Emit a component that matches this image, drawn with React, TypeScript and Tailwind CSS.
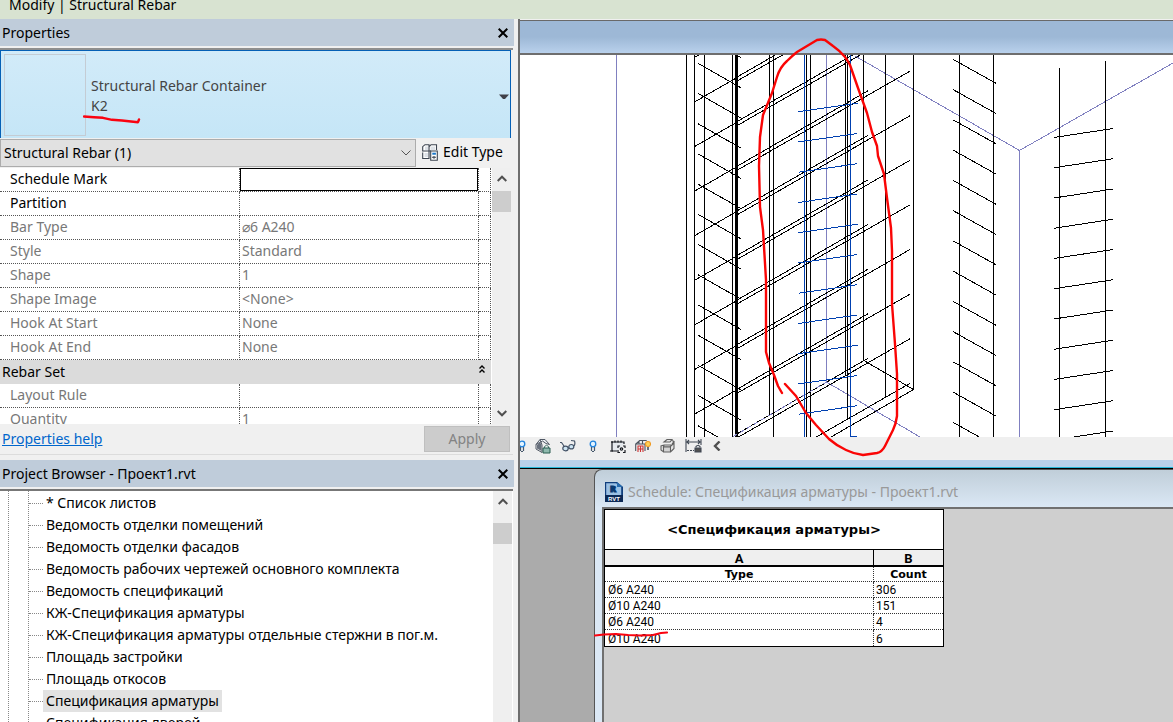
import React from 'react'

const properties = [
  { name: 'Schedule Mark', value: '', editable: true },
  { name: 'Partition', value: '', editable: true },
  { name: 'Bar Type', value: '⌀6 A240' },
  { name: 'Style', value: 'Standard' },
  { name: 'Shape', value: '1' },
  { name: 'Shape Image', value: '<None>' },
  { name: 'Hook At Start', value: 'None' },
  { name: 'Hook At End', value: 'None' },
]

const rebarSet = [
  { name: 'Layout Rule', value: '' },
  { name: 'Quantity', value: '1' },
]

const views = [
  '* Список листов',
  'Ведомость отделки помещений',
  'Ведомость отделки фасадов',
  'Ведомость рабочих чертежей основного комплекта',
  'Ведомость спецификаций',
  'КЖ-Спецификация арматуры',
  'КЖ-Спецификация арматуры отдельные стержни в пог.м.',
  'Площадь застройки',
  'Площадь откосов',
  'Спецификация арматуры',
  'Спецификация дверей',
]

const schedule = [
  ['Ø6 A240', '306'],
  ['Ø10 A240', '151'],
  ['Ø6 A240', '4'],
  ['Ø10 A240', '6'],
]

const range = (from: number, to: number) =>
  Array.from({ length: to - from + 1 }, (_, i) => from + i)

function PanelTitle({ title }: { title: string }) {
  return (
    <div className="mr-1 flex h-[27px] items-center justify-between bg-[#bfccda] pl-0.5 pr-1">
      <h2 className="text-sm">{title}</h2>
      <button aria-label={`Close ${title}`} className="p-0.5">
        <svg width="10" height="10" viewBox="0 0 10 10" stroke="#000" strokeWidth="2">
          <path d="M.7.7l8.6 8.6M9.3.7L.7 9.3" />
        </svg>
      </button>
    </div>
  )
}

function Chevron({ down = false }: { down?: boolean }) {
  return (
    <svg width="10" height="7" viewBox="0 0 10 7" fill="none" stroke="#505050" strokeWidth="2">
      <path d={down ? 'M.7 1L5 5.3 9.3 1' : 'M.7 6L5 1.700 9.300 6'} />
    </svg>
  )
}

function PropertyRow({ name, value, editable }: { name: string; value: string; editable?: boolean }) {
  const first = name === 'Schedule Mark'
  return (
    <tr className={editable ? 'h-6 text-black' : 'h-6 text-[#787878]'}>
      <th scope="row" className="h-6 border-b border-r border-dotted border-[#555] p-0 pb-0.5 pl-2.5 text-left font-normal">
        {name}
      </th>
      <td className="h-6 border-b border-r border-dotted border-[#555] p-0">
        {editable ? (
          <input
            aria-label={name}
            defaultValue={value}
            className={first ? 'block h-[23px] w-full border border-black px-0.5' : 'block h-[23px] w-full px-0.5'}
          />
        ) : (
          <span className="block pb-0.5 pl-0.5">{value}</span>
        )}
      </td>
      <td className="h-6 border-b border-r border-dotted border-[#555] p-0" />
    </tr>
  )
}

function PropertiesPanel() {
  return (
    <section>
      <PanelTitle title="Properties" />
      <div className="mr-[5px] mt-0.5 border-t-2 border-[#8f8f8f] pr-0.5">
        <button className="relative flex h-[88px] w-full items-center border border-b-0 border-[#0560b6] bg-linear-to-b from-[#d2ebf9] to-[#c5e6f7] pl-[3px] text-left text-sm text-[#444]">
          <span className="h-[82px] w-[82px] border border-[#c4ccd4]" />
          <span className="flex-1 pl-[5px] pt-0.5 leading-5">
            Structural Rebar Container
            <br />
            K2
          </span>
          <svg className="mr-px mt-1" width="10" height="6" viewBox="0 0 10 6" fill="#404048">
            <path d="M0 .5h10L6 5H4z" />
          </svg>
          <svg className="absolute left-[82px] top-[64px]" width="60" height="10" viewBox="83 115 60 10" fill="none" stroke="#fa0310" strokeWidth="2.400" strokeLinecap="round" strokeLinejoin="round">
            <path d="M84 116.500l10 .7 9 .6 9 2 10 .7 9 1 7 .7 1-2.700" />
          </svg>
        </button>
        <div className="flex h-[30px] items-center text-sm">
          <div className="relative w-[416px]">
            <select aria-label="Element filter" className="block h-7 w-full appearance-none border border-[#acacac] bg-[#e1e1e1] pl-[3px]">
              <option>Structural Rebar (1)</option>
            </select>
            <svg className="pointer-events-none absolute right-[5px] top-[11px]" width="10" height="6" viewBox="0 0 10 6" fill="none" stroke="#555">
              <path d="M.5.5L5 5 9.500.5" />
            </svg>
          </div>
          <button className="flex flex-1 items-center gap-[5px] pb-0.5 pl-1.5">
            <svg width="16" height="17" viewBox="0 0 16 17" fill="none" stroke="#3c4450" strokeWidth="1.100">
              <path d="M7 .7H3L.7 2.700V7H7zM14.500 6V.7H9L7.500 2.500M7 7v7.500H.7V8.500M7 7h2" fill="#fff" />
              <path d="M3 2.500h3V6H3zM9 2.500h4V6H9zM2.500 9H6v4H2.500z" fill="#dde2e8" stroke="none" />
              <path d="M8.700 7h6.600v9.300H8.700z" fill="#fff" />
              <path d="M10.300 8.700h3.600v2h-3.600z" fill="#1976c8" stroke="none" />
              <path d="M10 13.300h4M12 12v2.700" />
            </svg>
            Edit Type
          </button>
        </div>
        <div className="flex h-64 overflow-hidden bg-white text-sm">
          <div className="flex-1">
            <table className="w-[491px] table-fixed border-separate border-spacing-0">
              <colgroup>
                <col className="w-60" />
                <col />
                <col className="w-3" />
              </colgroup>
              <tbody>
                {properties.map((p) => (
                  <PropertyRow key={p.name} {...p} />
                ))}
                <tr className="h-6 bg-[#dbdbdb]">
                  <th colSpan={2} scope="colgroup" className="h-6 p-0 pl-0.5 text-left font-normal">
                    Rebar Set
                  </th>
                  <td className="p-0">
                    <svg className="mb-1.5" width="6" height="8" viewBox="0 0 6 8" fill="none" stroke="#000" strokeWidth="1.400">
                      <path d="M.5 3.500L3 1l2.500 2.500M.5 7.500L3 5l2.500 2.500" />
                    </svg>
                  </td>
                </tr>
                {rebarSet.map((p) => (
                  <PropertyRow key={p.name} {...p} />
                ))}
              </tbody>
            </table>
          </div>
          <div className="flex w-[19px] flex-col items-center justify-between bg-[#efefef] py-[7px]">
            <div className="flex w-full flex-col items-center gap-[9px]">
              <Chevron />
              <div className="h-[21px] w-full bg-[#cdcdcd]" />
            </div>
            <Chevron down />
          </div>
        </div>
        <div className="flex h-[30px] items-center justify-between pl-0.5 pr-px text-sm">
          <a href="#help" className="text-[#0066cc] underline">
            Properties help
          </a>
          <button className="h-[26px] w-[86px] border border-[#bfbfbf] bg-[#cccccc] text-[#838383]">Apply</button>
        </div>
      </div>
      <div className="mr-[5px] h-1.5 border-t border-[#dcdcdc] bg-[#f0f0f0]" />
    </section>
  )
}

function ProjectBrowser() {
  return (
    <section className="flex min-h-0 flex-1 flex-col">
      <PanelTitle title="Project Browser - Проект1.rvt" />
      <div className="mr-[5px] mt-0.5 flex min-h-0 flex-1 border-t-2 border-[#777] bg-white pr-px">
        <div className="ml-2 flex-1 overflow-hidden border-l border-dotted border-[#888] pl-[19px]">
          <ul className="border-l border-dotted border-[#888] pt-px text-sm">
            {views.map((v) => (
              <li key={v} className="flex h-[22px] items-center">
                <span className="w-3.5 border-t border-dotted border-[#888]" />
                <span className={v === 'Спецификация арматуры' ? 'bg-[#e2e2e2] px-[3px] leading-[22px]' : 'px-[3px] leading-[22px]'}>
                  {v}
                </span>
              </li>
            ))}
          </ul>
        </div>
        <div className="flex w-[19px] flex-col items-center gap-[18px] bg-[#efefef] pt-[7px]">
          <Chevron />
          <div className="h-[21px] w-full bg-[#cdcdcd]" />
        </div>
      </div>
    </section>
  )
}

// [x, bottom end] of each vertical bar
const blackVerticals = [
  [686, 437], [694, 437], [704, 437], [732, 437], [769, 416], [773, 437], [806, 437], [810, 437],
  [845, 375], [847, 419], [863, 360], [885, 397], [913, 389], [959, 437], [993, 437],
]

function RebarDrawing() {
  return (
    <svg className="block" width="653" height="382" viewBox="520 55 653 382" fill="none" shapeRendering="crispEdges">
      <g stroke="#8080c0">
        <path d="M616.500 55V437M826.500 55V382M1019.500 150V437" />
        <path d="M855 56L1019.500 150.500 1173 63" />
        <path d="M826.500 382L920 437" />
      </g>
      <g stroke="#000">
        {blackVerticals.map(([x, end]) => (
          <path key={x} d={`M${x + 0.5} 55V${end}`} />
        ))}
        <path d="M736.500 55V437" strokeWidth="3" />
        <path d="M1059.500 68V437M1105.500 61V437" />
        {range(-1, 12).map((n) => (
          <path key={`d${n}`} d={`M698 ${63.3 + n * 30.2}l43 24.500`} />
        ))}
        {range(-1, 7).map((n) => (
          <path key={`a${n}`} d={`M695 ${101.7 + n * 44.6}l41-23.600`} />
        ))}
        {range(-3, 6).map((n) => (
          <path key={`u${n}`} d={`M738 ${165.7 + n * 44.6}l130-75`} />
        ))}
        {range(-3, 7).map((n) => (
          <path key={`l${n}`} d={`M738 ${169.7 + n * 44.6}l172-98.600`} />
        ))}
        <path d="M863 360L913.500 389.500 831 437" />
        {range(0, 12).map((n) => (
          <path key={`r${n}`} d={`M953 ${59.3 + n * 30.25}l43 24`} />
        ))}
        {range(0, 10).map((n) => (
          <path key={`s${n}`} d={`M1054 ${137.5 + n * 30.25}l59-9`} />
        ))}
      </g>
      <path d="M733 436.500L826.500 382" stroke="#8080c0" strokeDasharray="5 3" />
      <g stroke="#0040b0">
        <path d="M804.500 55V437M850.500 55V437" />
        {range(0, 11).map((n) => (
          <path key={n} d={`M798.500 ${111.7 + n * 30.25}l59-8.500`} />
        ))}
      </g>
    </svg>
  )
}

function Bulb() {
  return (
    <svg width="16" height="16" viewBox="0 0 16 16" fill="none">
      <circle cx="8" cy="6" r="2.800" fill="#e4f4ff" stroke="#2082dc" strokeWidth="1.300" />
      <path d="M6.500 9v4M9.500 9v4M7 13.500h2" stroke="#46586c" strokeWidth="1.200" />
    </svg>
  )
}

function ViewControls() {
  return (
    <div className="flex h-[22px] items-center gap-[9px] overflow-hidden bg-[#efefef] pb-1">
      <button aria-label="Reveal constraints" className="-ml-1.5 -mr-1">
        <Bulb />
      </button>
      <button aria-label="Locked 3D view">
        <svg width="16" height="16" viewBox="0 0 16 16" fill="none" stroke="#505864">
          <path d="M1 6.500L5 1.500h5l4.500 5L11 5.500 7.500 3z" fill="#eef1f4" />
          <path d="M5 1.500L7 7M1 6.500V11l6 3.500V7" />
          <path d="M2 7l3-3 1.500 3v6L2 10.500z" fill="#68707c" stroke="none" />
          <path d="M9.500 10V8.500q2-2.500 4 0V10" stroke="#46756a" />
          <path d="M8 10h7v5H8z" fill="#8fb9ae" stroke="#285c50" />
        </svg>
      </button>
      <button aria-label="Temporary hide">
        <svg width="16" height="16" viewBox="0 0 16 16" fill="none" stroke="#455468" strokeWidth="1.200">
          <path d="M0 4.500h1.500L4 8M8 10.500l1-1M11 2.500l3.500.5q1 3-.5 5" />
          <ellipse cx="5.500" cy="10.500" rx="2.700" ry="2.300" fill="#cde5f3" />
          <ellipse cx="11.300" cy="8.700" rx="2.500" ry="2.200" fill="#cde5f3" />
        </svg>
      </button>
      <button aria-label="Reveal hidden elements">
        <Bulb />
      </button>
      <button aria-label="Crop view">
        <svg width="16" height="16" viewBox="0 0 16 16" fill="none" stroke="#161a20" strokeWidth="1.200">
          <path d="M7 13H2V4h12v2" fill="#e5e9ed" />
          <path d="M2 3v2M5 2.500v2M8 2.500v2M11 2.500v2M0 13h3" />
          <path d="M8 10V8h2M13 8h2v2M15 12v2.500h-2M10 14.500H8V12" />
          <circle cx="11.500" cy="11" r="1.200" />
        </svg>
      </button>
      <button aria-label="Show analytical model">
        <svg width="16" height="16" viewBox="0 0 16 16" fill="none" stroke="#4b535e" strokeWidth="1.100">
          <path d="M.7 13V6l4-3.500h7M.7 6h10M4 6V3M7.500 6V3M10 13V6" />
          <path d="M3 14V8h5v6M3 11h5M5.500 8v6" stroke="#cf3434" />
          <circle cx="13" cy="6" r="2.500" fill="#ffd45a" stroke="#f09922" />
          <path d="M13 9v3" stroke="#68707c" strokeWidth="2" />
        </svg>
      </button>
      <button aria-label="Highlight displacement sets">
        <svg width="16" height="16" viewBox="0 0 16 16" fill="none" stroke="#606060" strokeWidth="1.100">
          <path d="M4 4l3-2.500h5L10 4zM12 2.500l2 1-2 2.500M4 7l-3 1v4l2 1.500M4 7h8l-2 2H3.500zM12 7l2-2v5.500l-3 3" fill="#e5e5e5" />
          <path d="M3.500 9h7v5h-7z" fill="#d4d4d4" />
        </svg>
      </button>
      <button aria-label="Lock dimensions">
        <svg width="17" height="16" viewBox="0 0 17 16" fill="none" stroke="#404854" strokeWidth="1.100">
          <path d="M1 1v13M16 1v6M2 4h13M4 2L2 4l2 2M13 2l2 2-2 2" />
          <path d="M2 12.500h7" strokeDasharray="2 1" />
          <path d="M11 9.500V8.500q2-2 4 0v1" />
          <path d="M10 10h6v4h-6z" fill="#505050" />
        </svg>
      </button>
      <button aria-label="Scroll left" className="pl-0.5">
        <svg width="8" height="10" viewBox="0 0 8 10" fill="none" stroke="#505050" strokeWidth="2.400">
          <path d="M6.500.5L2 5l4.500 4.500" />
        </svg>
      </button>
    </div>
  )
}

function ModelView() {
  return (
    <section className="relative mt-px border-t border-[#696969]">
      <div className="h-8 bg-linear-to-b from-[#9db8d6] from-50% to-[#b9d1ec]" />
      <div className="border-t-2 border-[#6e6e6e] bg-white">
        <RebarDrawing />
      </div>
      <ViewControls />
      <div className="mt-px h-[9px] border-b border-black bg-[#b9d1ea] shadow-[inset_0_-1px_0_#28b8d8]" />
      <svg className="pointer-events-none absolute left-0 top-0" width="653" height="440" viewBox="520 21 653 440" fill="none" stroke="#fa0505" strokeWidth="2.400" strokeLinecap="round" strokeLinejoin="round">
        <path d="M782 393l-4-7-4-11-5-12-3-11V280l-3-50-3-23-1-41 1-29 3-22 9-22 5-16q3-10 10-16 5-5 10-9l15-9 5-3q4-1 8 0l8 6q6 4 12 11 3 4 5 8l8 23 9 25 5 19 5 14 1 10 6 18 3 24 4 30 1 23v53l3 40 2 30v42q-1 8-4 14l-8 16q-3 6-8 7l-14 2q-9-1-17-5-9-4-17-11l-13-14-10-12-10-17-11-12" />
      </svg>
    </section>
  )
}

function ScheduleWindow() {
  return (
    <section className="relative ml-[74px] flex flex-1 flex-col rounded-tl-lg border-l border-t border-[#555] bg-linear-to-b from-[#c0ced9] to-[#dbe8f5] to-15% pl-[7px]">
      <div className="flex h-[37px] items-center gap-[5px] pl-[3px] pt-[7px]">
        <svg width="18" height="20" viewBox="0 0 18 20">
          <path d="M0 0h12l6 5v15H0z" fill="#103e7c" />
          <path d="M1.200 1.200h10l5 4V13H1.200z" fill="#9bc0e3" />
          <path d="M12 0v5h6z" fill="#286bad" />
          <text x="5" y="10" fontSize="9" fontWeight="800" fill="#08386e" stroke="#08386e" fontFamily="Open Sans, sans-serif">R</text>
          <path d="M0 13h18v7H0z" fill="#0b2855" />
          <text x="3" y="19" fontSize="6" fontWeight="800" fill="#fff" fontFamily="Liberation Sans, sans-serif">RVT</text>
        </svg>
        <h2 className="text-sm text-[#999]">Schedule: Спецификация арматуры - Проект1.rvt</h2>
      </div>
      <div className="flex-1 border-l-2 border-t-2 border-[#707070] bg-[#cfcfcf]">
        <table className="w-[340px] table-fixed border-separate border-spacing-0 border border-black bg-white font-['Roboto',sans-serif] text-xs leading-[13px]">
          <colgroup>
            <col />
            <col className="w-[69px]" />
          </colgroup>
          <thead>
            <tr>
              <th colSpan={2} className="h-10 border-b border-black p-0 font-['DejaVu_Sans',sans-serif] text-[13px]">
                &lt;Спецификация арматуры&gt;
              </th>
            </tr>
            <tr className="bg-[#efefef] text-[13px] leading-[13px]">
              <th className="h-[17px] border-b-2 border-r border-black p-0 pt-0.5">A</th>
              <th className="h-[17px] border-b-2 border-black p-0 pt-0.5">B</th>
            </tr>
            <tr className="font-['DejaVu_Sans',sans-serif] text-[11px] leading-[12px]">
              <th className="h-[15px] border-b border-r border-dotted border-[#333] p-0 pt-0.5">Type</th>
              <th className="h-[15px] border-b border-dotted border-[#333] p-0 pt-0.5">Count</th>
            </tr>
          </thead>
          <tbody>
            {schedule.map(([type, count], i) => (
              <tr key={i} className="*:border-b last:*:border-b-0">
                <td className="h-4 border-r border-dotted border-[#333] p-0 pl-[3px] pt-0.5">{type}</td>
                <td className="h-4 border-dotted border-[#333] p-0 pl-0.5 pt-0.5">{count}</td>
              </tr>
            ))}
          </tbody>
        </table>
      </div>
      <svg className="absolute -left-px top-[160px]" width="76" height="8" viewBox="594 630 76 8" fill="none" stroke="#fa0310" strokeWidth="2.200" strokeLinecap="round" strokeLinejoin="round">
        <path d="M595 635.500l9-1 12-.5 12 1 12 .5 13-.5 8-2 6-.5" />
      </svg>
    </section>
  )
}

export default function App() {
  return (
    <div className="flex h-screen flex-col overflow-hidden bg-[#f0f0f0] font-['Noto_Sans',sans-serif] text-black">
      <header className="flex h-[19px] shrink-0 items-end bg-[#d8e3d1] pb-1 pl-[9px]">
        <h1 className="text-sm leading-5">Modify | Structural Rebar</h1>
      </header>
      <main className="flex min-h-0 flex-1">
        <div className="flex w-[518px] shrink-0 flex-col">
          <PropertiesPanel />
          <ProjectBrowser />
        </div>
        <div className="flex min-w-0 flex-1 flex-col overflow-hidden border-l-2 border-[#6e6e6e]">
          <ModelView />
          <div className="flex min-h-0 flex-1 flex-col bg-[#ababab]">
            <ScheduleWindow />
          </div>
        </div>
      </main>
    </div>
  )
}
